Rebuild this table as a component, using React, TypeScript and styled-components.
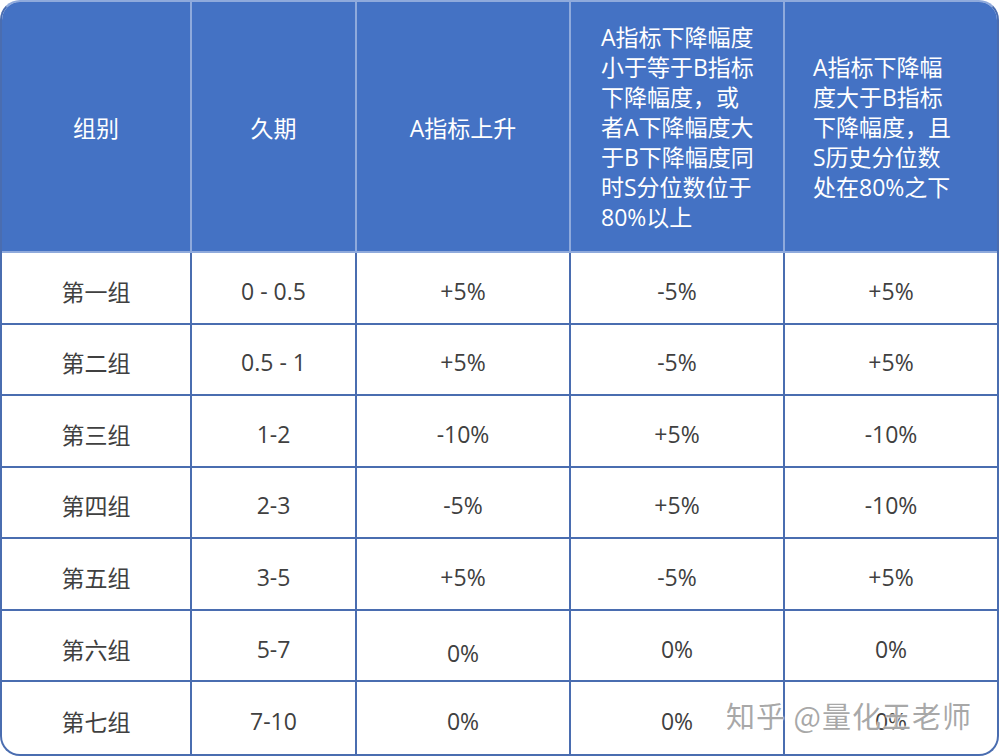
import { FC } from "react";
import styled, { createGlobalStyle } from "styled-components";

const GlobalStyle = createGlobalStyle`
  html, body {
    margin: 0;
    padding: 0;
    background: #ffffff;
  }
  body {
    font-family: "Open Sans", "Noto Sans CJK SC", sans-serif;
  }
`;

type HeaderCol = {
  lines: string[];
  padLeft?: number; // 複数行の見出しは左寄せ
};

const headers: HeaderCol[] = [
  { lines: ["组别"] },
  { lines: ["久期"] },
  { lines: ["A指标上升"] },
  {
    lines: [
      "A指标下降幅度",
      "小于等于B指标",
      "下降幅度，或",
      "者A下降幅度大",
      "于B下降幅度同",
      "时S分位数位于",
      "80%以上",
    ],
    padLeft: 30,
  },
  {
    lines: ["A指标下降幅", "度大于B指标", "下降幅度，且", "S历史分位数", "处在80%之下"],
    padLeft: 28,
  },
];

const rows: string[][] = [
  ["第一组", "0 - 0.5", "+5%", "-5%", "+5%"],
  ["第二组", "0.5 - 1", "+5%", "-5%", "+5%"],
  ["第三组", "1-2", "-10%", "+5%", "-10%"],
  ["第四组", "2-3", "-5%", "+5%", "-10%"],
  ["第五组", "3-5", "+5%", "-5%", "+5%"],
  ["第六组", "5-7", "0%", "0%", "0%"],
  ["第七组", "7-10", "0%", "0%", "0%"],
];

/**
 * 久期分组表.
 */
const App: FC = () => {
  return (
    <>
      <GlobalStyle />
      <Frame>
        <Grid>
          {headers.map((h, i) => (
            <HeadCell key={`h${i}`} $last={i === headers.length - 1}>
              {h.padLeft !== undefined ? (
                <HeadLines $padLeft={h.padLeft}>
                  {h.lines.map((line) => (
                    <Line key={line}>{line}</Line>
                  ))}
                </HeadLines>
              ) : (
                <span>{h.lines[0]}</span>
              )}
            </HeadCell>
          ))}
          {rows.map((row, r) =>
            row.map((value, c) => (
              <BodyCell
                key={`${r}-${c}`}
                $last={c === row.length - 1}
                $bottom={r === rows.length - 1}
                $shift={r === 5 && c === 2 ? 8 : 0}
              >
                {value}
              </BodyCell>
            ))
          )}
        </Grid>
        <Watermark>知乎 @量化王老师</Watermark>
      </Frame>
    </>
  );
};

export default App;

const Frame = styled.div`
  position: relative;
  width: 999px;
  height: 756px;
  box-sizing: border-box;
  border: 2px solid #4a6db0;
  border-top-color: #8faadc;
  border-radius: 20px;
  overflow: hidden;
  background: #ffffff;
`;

const Grid = styled.div`
  display: grid;
  grid-template-columns: 190px 165px 214px 214px 212px;
  grid-template-rows: 251px repeat(7, 1fr);
  height: 100%;
`;

const HeadCell = styled.div<{ $last: boolean }>`
  display: flex;
  align-items: center;
  justify-content: center;
  box-sizing: border-box;
  background: #4472c4;
  color: #ffffff;
  font-size: 23px;
  border-bottom: 2px solid #8faadc;
  border-right: ${(p) => (p.$last ? "none" : "2px solid #8faadc")};
`;

const HeadLines = styled.div<{ $padLeft: number }>`
  width: 100%;
  box-sizing: border-box;
  padding-left: ${(p) => p.$padLeft}px;
  text-align: left;
  white-space: nowrap;
`;

const Line = styled.div`
  height: 30px;
  line-height: 30px;
`;

const BodyCell = styled.div<{ $last: boolean; $bottom: boolean; $shift: number }>`
  display: flex;
  align-items: center;
  justify-content: center;
  box-sizing: border-box;
  padding-top: ${(p) => 6 + p.$shift}px;
  color: #404040;
  font-size: 23px;
  white-space: pre;
  border-right: ${(p) => (p.$last ? "none" : "2px solid #4a6db0")};
  border-bottom: ${(p) => (p.$bottom ? "none" : "2px solid #4a6db0")};
`;

const Watermark = styled.div`
  position: absolute;
  right: 25px;
  bottom: 18px;
  font-family: "Noto Sans CJK SC", sans-serif;
  font-size: 29px;
  letter-spacing: 1px;
  color: rgba(140, 140, 140, 0.75);
  text-shadow: 0 0 2px #ffffff, 0 0 2px #ffffff;
  pointer-events: none;
  white-space: nowrap;
`;
